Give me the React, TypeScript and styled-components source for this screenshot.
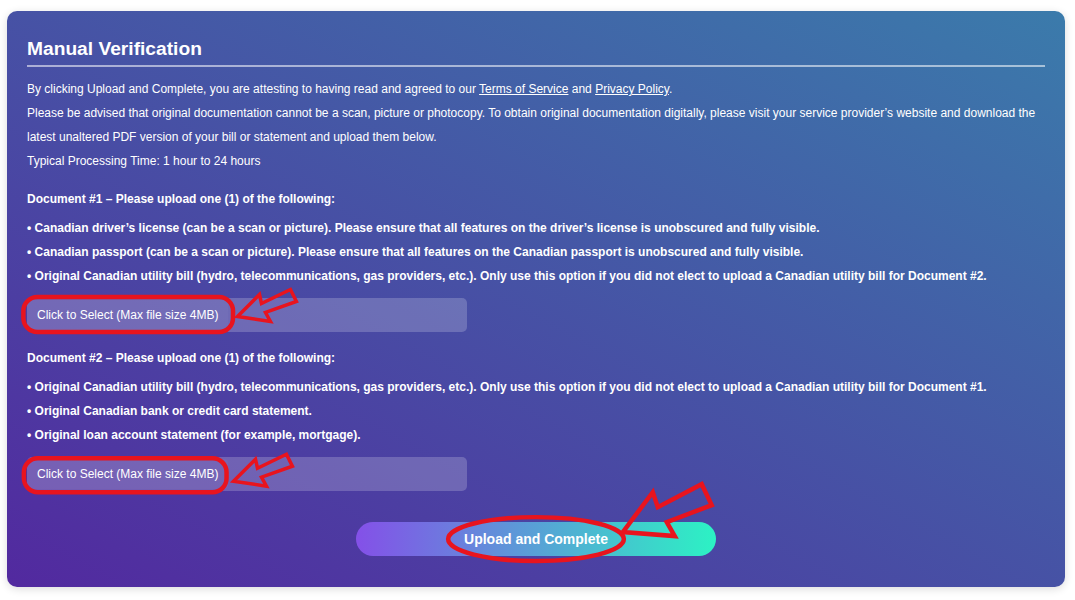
import React from 'react';
import styled, { createGlobalStyle } from 'styled-components';

const GlobalStyle = createGlobalStyle`
  html, body {
    margin: 0;
    padding: 0;
    background: #ffffff;
  }
  body {
    font-family: 'Liberation Sans', Arial, sans-serif;
  }
`;

const documentOne = [
  'Canadian driver’s license (can be a scan or picture). Please ensure that all features on the driver’s license is unobscured and fully visible.',
  'Canadian passport (can be a scan or picture). Please ensure that all features on the Canadian passport is unobscured and fully visible.',
  'Original Canadian utility bill (hydro, telecommunications, gas providers, etc.). Only use this option if you did not elect to upload a Canadian utility bill for Document #2.',
];

const documentTwo = [
  'Original Canadian utility bill (hydro, telecommunications, gas providers, etc.). Only use this option if you did not elect to upload a Canadian utility bill for Document #1.',
  'Original Canadian bank or credit card statement.',
  'Original loan account statement (for example, mortgage).',
];

// red hand-drawn marks, in card coordinates
const arrows = [
  { points: '230,306 252,284 254,293 283,279 289,291 258,302 263,311', width: 3.5 },
  { points: '226,471 248,449 250,458 279,444 285,456 254,467 259,476', width: 3.5 },
  { points: '616,522 646,482 651,497 695,474 705,495 660,512 668,526', width: 4.5 },
];

function FilePicker() {
  return (
    <FileBar>
      <SelectButton type="button">Click to Select (Max file size 4MB)</SelectButton>
    </FileBar>
  );
}

function App() {
  return (
    <>
      <GlobalStyle />
      <Page>
        <Card>
          <Title>Manual Verification</Title>
          <Rule />
          <Text>
            By clicking Upload and Complete, you are attesting to having read and agreed to our{' '}
            <Link>Terms of Service</Link> and <Link>Privacy Policy</Link>.
          </Text>
          <Text>
            Please be advised that original documentation cannot be a scan, picture or photocopy. To
            obtain original documentation digitally, please visit your service provider’s website and
            download the latest unaltered PDF version of your bill or statement and upload them below.
          </Text>
          <Text>Typical Processing Time: 1 hour to 24 hours</Text>

          <Heading>Document #1 – Please upload one (1) of the following:</Heading>
          <List>
            {documentOne.map((item) => (
              <li key={item}>• {item}</li>
            ))}
          </List>
          <FilePicker />

          <Heading>Document #2 – Please upload one (1) of the following:</Heading>
          <List>
            {documentTwo.map((item) => (
              <li key={item}>• {item}</li>
            ))}
          </List>
          <FilePicker />

          <SubmitRow>
            <SubmitButton type="button">Upload and Complete</SubmitButton>
          </SubmitRow>

          <Marks viewBox="0 0 1058 577">
            <rect x="15.5" y="286.5" width="210" height="35" rx="14" />
            <rect x="16" y="448" width="203" height="34" rx="14" />
            <ellipse cx="529" cy="529" rx="88" ry="22" strokeWidth={4.5} />
            {arrows.map((a) => (
              <polygon key={a.points} points={a.points} strokeWidth={a.width} />
            ))}
          </Marks>
        </Card>
      </Page>
    </>
  );
}

export default App;

const Page = styled.div`
  padding: 11px 10px 12px 7px;
`;

const Card = styled.div`
  position: relative;
  box-sizing: border-box;
  padding: 24px 20px 31px;
  border-radius: 10px;
  background: linear-gradient(to top right, #52299f, #3b7bab);
  box-shadow: 0 2px 8px rgba(0, 0, 0, 0.14);
  color: #ffffff;
`;

const Title = styled.h2`
  margin: 0;
  font-size: 19.2px;
  line-height: 27px;
  font-weight: 700;
`;

const Rule = styled.div`
  height: 2px;
  margin: 3px 0 10px;
  background: rgba(255, 255, 255, 0.55);
`;

const Text = styled.p`
  margin: 0;
  font-size: 12px;
  line-height: 24px;
`;

const Link = styled.a`
  color: #ffffff;
  text-decoration: underline;
  cursor: pointer;
`;

const Heading = styled.p`
  margin: 14px 0 0;
  font-size: 12px;
  line-height: 24px;
  font-weight: 700;
`;

const List = styled.ul`
  list-style: none;
  margin: 5px 0 0;
  padding: 0;
  li {
    font-size: 12px;
    line-height: 24px;
    font-weight: 700;
  }
`;

const FileBar = styled.div`
  display: flex;
  align-items: center;
  width: 440px;
  height: 34px;
  margin-top: 10px;
  border-radius: 5px;
  background: rgba(255, 255, 255, 0.2);
`;

const SelectButton = styled.button`
  height: 30px;
  padding: 0 10px;
  border: none;
  border-radius: 4px;
  background: rgba(255, 255, 255, 0.03);
  color: #ffffff;
  font-family: 'Liberation Sans', Arial, sans-serif;
  font-size: 12px;
  cursor: pointer;
`;

const SubmitRow = styled.div`
  display: flex;
  justify-content: center;
  margin-top: 31px;
`;

const SubmitButton = styled.button`
  width: 360px;
  height: 34px;
  border: none;
  border-radius: 17px;
  background: linear-gradient(90deg, #8450e8, #2cf2c4);
  color: #ffffff;
  font-family: 'Liberation Sans', Arial, sans-serif;
  font-size: 14px;
  font-weight: 700;
  cursor: pointer;
`;

const Marks = styled.svg`
  position: absolute;
  inset: 0;
  width: 100%;
  height: 100%;
  pointer-events: none;
  fill: none;
  stroke: #e8141e;
  stroke-width: 4.5;
  stroke-linejoin: miter;
`;
